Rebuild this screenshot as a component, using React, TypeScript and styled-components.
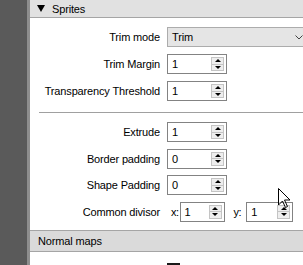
import * as React from 'react'
import styled, { createGlobalStyle } from 'styled-components'

const GlobalStyle = createGlobalStyle`
    html, body {
        margin: 0;
        padding: 0;
        background: #ffffff;
    }
    body {
        font-family: "Liberation Sans", Arial, sans-serif;
        font-size: 11px;
        letter-spacing: -0.15px;
        color: #000000;
    }
`;

const Page = styled.div`
    display: flex;
    width: 303px;
    height: 265px;
    overflow: hidden;
    position: relative;
`;

const SideStrip = styled.div`
    width: 27px;
    flex: none;
    background: #5a5a5a;
    border-right: 3px solid #8e8e8e;
`;

const Panel = styled.div`
    flex: 1;
    min-width: 0;
    display: flex;
    flex-direction: column;
    background: #ffffff;
    overflow: hidden;
`;

const SectionHeader = styled.div<{ $boxed?: boolean }>`
    display: flex;
    align-items: center;
    gap: 7px;
    flex: none;
    height: ${(p) => (p.$boxed ? '20px' : '17px')};
    padding-left: ${(p) => (p.$boxed ? '8px' : '7px')};
    background: ${(p) => (p.$boxed ? '#dadada' : '#e1e1e1')};
    border-top: ${(p) => (p.$boxed ? '1px solid #a5a5a5' : 'none')};
    border-bottom: 1px solid #a5a5a5;
    white-space: nowrap;
`;

const Caret = styled.span`
    width: 0;
    height: 0;
    border-left: 4px solid transparent;
    border-right: 4px solid transparent;
    border-top: 7px solid #000000;
`;

const Form = styled.div`
    display: flex;
    flex-direction: column;
    padding-top: 9px;
`;

const Row = styled.div<{ $after: number }>`
    display: grid;
    grid-template-columns: 130px 1fr;
    column-gap: 7px;
    align-items: center;
    height: 20px;
    margin-bottom: ${(p) => p.$after}px;
`;

const Label = styled.div`
    text-align: right;
    white-space: nowrap;
`;

const Separator = styled.div`
    height: 1px;
    background: #a0a0a0;
    margin: 0 0 9px 9px;
`;

const Combo = styled.div`
    display: flex;
    align-items: center;
    justify-content: space-between;
    box-sizing: border-box;
    width: 145px;
    height: 20px;
    padding: 0 8px 0 4px;
    background: #e5e5e5;
    border: 1px solid #acacac;
`;

const SpinBox = styled.div<{ $width: number }>`
    display: flex;
    align-items: center;
    box-sizing: border-box;
    flex: none;
    width: ${(p) => p.$width}px;
    height: 20px;
    padding: 2px 2px 2px 4px;
    background: #ffffff;
    border: 1px solid #838383;
`;

const SpinValue = styled.span`
    flex: 1;
`;

const SpinButtons = styled.div`
    display: flex;
    flex-direction: column;
    width: 13px;
    height: 100%;
    box-sizing: border-box;
    border: 1px solid #c4c4c4;
    background: #eeeeee;
`;

const SpinArrow = styled.div<{ $down?: boolean }>`
    flex: 1;
    display: flex;
    align-items: center;
    justify-content: center;
    border-top: ${(p) => (p.$down ? '1px solid #c4c4c4' : 'none')};

    &::before {
        content: '';
        width: 0;
        height: 0;
        border-left: 3px solid transparent;
        border-right: 3px solid transparent;
        ${(p) => (p.$down ? 'border-top: 3px solid #000;' : 'border-bottom: 3px solid #000;')}
    }
`;

const PairField = styled.div`
    display: flex;
    align-items: center;
    padding-left: 4px;
`;

const AxisLabel = styled.span<{ $gapBefore?: number; $gapAfter: number }>`
    margin-left: ${(p) => p.$gapBefore ?? 0}px;
    margin-right: ${(p) => p.$gapAfter}px;
    letter-spacing: -0.5px;
`;

const Footer = styled.div`
    flex: 1;
    position: relative;
`;

const Handle = styled.div`
    position: absolute;
    left: 137px;
    bottom: 0;
    width: 13px;
    height: 2px;
    background: #1a1a1a;
`;

const Cursor = styled.svg`
    position: absolute;
    left: 278px;
    top: 188px;
    pointer-events: none;
`;

interface SpinProps {
    value: string
    width?: number
}

const Spin: React.FC<SpinProps> = ({ value, width = 60 }) => (
    <SpinBox $width={width}>
        <SpinValue>{value}</SpinValue>
        <SpinButtons>
            <SpinArrow />
            <SpinArrow $down />
        </SpinButtons>
    </SpinBox>
);

export default function App() {
    return (
        <>
            <GlobalStyle />
            <Page>
                <SideStrip />
                <Panel>
                    <SectionHeader>
                        <Caret />
                        <span>Sprites</span>
                    </SectionHeader>
                    <Form>
                        <Row $after={7}>
                            <Label>Trim mode</Label>
                            <Combo>
                                <span>Trim</span>
                                <svg width="8" height="5" viewBox="0 0 8 5">
                                    <path d="M0.5 0.5 L4 4 L7.5 0.5" fill="none" stroke="#444" strokeWidth="1" />
                                </svg>
                            </Combo>
                        </Row>
                        <Row $after={7}>
                            <Label>Trim Margin</Label>
                            <Spin value="1" />
                        </Row>
                        <Row $after={11}>
                            <Label>Transparency Threshold</Label>
                            <Spin value="1" />
                        </Row>
                        <Separator />
                        <Row $after={6.5}>
                            <Label>Extrude</Label>
                            <Spin value="1" />
                        </Row>
                        <Row $after={6.5}>
                            <Label>Border padding</Label>
                            <Spin value="0" />
                        </Row>
                        <Row $after={6.5}>
                            <Label>Shape Padding</Label>
                            <Spin value="0" />
                        </Row>
                        <Row $after={8}>
                            <Label>Common divisor</Label>
                            <PairField>
                                <AxisLabel $gapAfter={1}>x:</AxisLabel>
                                <Spin value="1" width={45} />
                                <AxisLabel $gapBefore={9} $gapAfter={5}>y:</AxisLabel>
                                <Spin value="1" width={47} />
                            </PairField>
                        </Row>
                    </Form>
                    <SectionHeader $boxed>
                        <span>Normal maps</span>
                    </SectionHeader>
                    <Footer>
                        <Handle />
                    </Footer>
                </Panel>
                <Cursor width="13" height="21" viewBox="0 0 13 21">
                    <path
                        d="M0.5 0.5 L0.5 17 L4.5 13 L7.5 19.5 L9.5 18.5 L6.5 12 L12 12 Z"
                        fill="#ffffff"
                        fillOpacity="0.6"
                        stroke="#000"
                        strokeWidth="1"
                    />
                </Cursor>
            </Page>
        </>
    );
}
